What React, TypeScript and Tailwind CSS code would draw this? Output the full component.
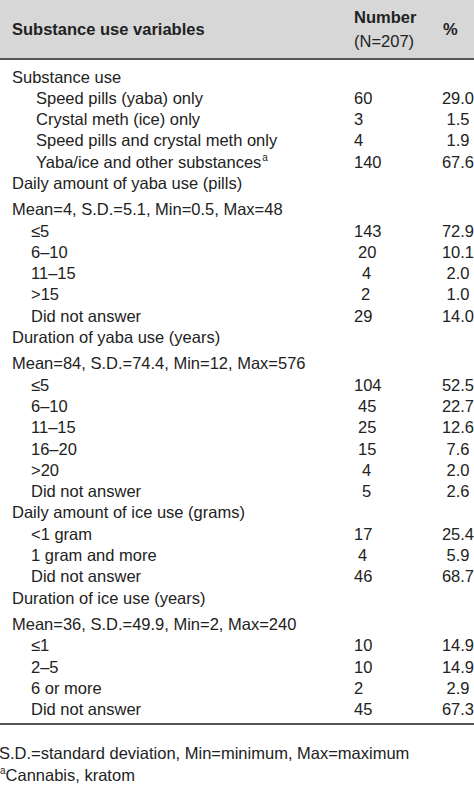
type Row = {
  label: string;
  indent?: "sub" | "item";
  n?: string;
  pct?: string;
  np?: string;
  sup?: string;
  gap?: boolean;
};

const rows: Row[] = [
  { label: "Substance use" },
  { label: "Speed pills (yaba) only", indent: "sub", n: "60", pct: "29.0" },
  { label: "Crystal meth (ice) only", indent: "sub", n: "3", pct: "1.5" },
  { label: "Speed pills and crystal meth only", indent: "sub", n: "4", pct: "1.9" },
  { label: "Yaba/ice and other substances", indent: "sub", n: "140", pct: "67.6", sup: "a" },
  { label: "Daily amount of yaba use (pills)" },
  { label: "Mean=4, S.D.=5.1, Min=0.5, Max=48", gap: true },
  { label: "≤5", indent: "item", n: "143", pct: "72.9" },
  { label: "6–10", indent: "item", n: "20", pct: "10.1", np: "pl-1" },
  { label: "11–15", indent: "item", n: "4", pct: "2.0", np: "pl-2" },
  { label: ">15", indent: "item", n: "2", pct: "1.0", np: "pl-[7px]" },
  { label: "Did not answer", indent: "item", n: "29", pct: "14.0" },
  { label: "Duration of yaba use (years)" },
  { label: "Mean=84, S.D.=74.4, Min=12, Max=576", gap: true },
  { label: "≤5", indent: "item", n: "104", pct: "52.5" },
  { label: "6–10", indent: "item", n: "45", pct: "22.7", np: "pl-1" },
  { label: "11–15", indent: "item", n: "25", pct: "12.6", np: "pl-1" },
  { label: "16–20", indent: "item", n: "15", pct: "7.6", np: "pl-1" },
  { label: ">20", indent: "item", n: "4", pct: "2.0", np: "pl-2" },
  { label: "Did not answer", indent: "item", n: "5", pct: "2.6", np: "pl-2" },
  { label: "Daily amount of ice use (grams)" },
  { label: "<1 gram", indent: "item", n: "17", pct: "25.4" },
  { label: "1 gram and more", indent: "item", n: "4", pct: "5.9", np: "pl-1" },
  { label: "Did not answer", indent: "item", n: "46", pct: "68.7" },
  { label: "Duration of ice use (years)" },
  { label: "Mean=36, S.D.=49.9, Min=2, Max=240", gap: true },
  { label: "≤1", indent: "item", n: "10", pct: "14.9" },
  { label: "2–5", indent: "item", n: "10", pct: "14.9" },
  { label: "6 or more", indent: "item", n: "2", pct: "2.9" },
  { label: "Did not answer", indent: "item", n: "45", pct: "67.3" },
];

function TableRow({ row }: { row: Row }) {
  const pad =
    row.indent === "sub" ? "pl-[36px]" : row.indent === "item" ? "pl-[31px]" : "pl-[12px]";
  return (
    <div className={`grid grid-cols-[354px_84px_40px] h-[21.3px] items-center ${row.gap ? "mt-[5px]" : ""}`}>
      <div className={`${pad} whitespace-nowrap`}>
        {row.label}
        {row.sup && <sup className="text-[10px] relative -top-[7px] ml-[1px]">{row.sup}</sup>}
      </div>
      <div className={row.np ?? ""}>{row.n}</div>
      <div className="text-center">{row.pct}</div>
    </div>
  );
}

export default function App() {
  return (
    <div
      className="w-[474px] h-[789px] overflow-hidden bg-white text-[#222] text-[16.5px]"
      style={{ fontFamily: '"Liberation Sans", Arial, sans-serif' }}
    >
      <div className="grid grid-cols-[354px_84px_40px] h-[60px] bg-[#d7d7d7] border-b-2 border-[#555] items-center">
        <div className="pl-[12px] font-bold">Substance use variables</div>
        <div className="flex flex-col leading-[24px]">
          <span className="font-bold">Number</span>
          <span>(N=207)</span>
        </div>
        <div className="font-bold pl-[5px]">%</div>
      </div>
      <div className="pt-[4.5px] pb-[5px] border-b-2 border-[#555]">
        {rows.map((r, i) => (
          <TableRow key={i} row={r} />
        ))}
      </div>
      <div className="pt-[17px] leading-[22px] whitespace-nowrap">
        <div className="-ml-[1px]">S.D.=standard deviation, Min=minimum, Max=maximum</div>
        <div>
          <sup className="text-[10px] relative -top-[7px]">a</sup>Cannabis, kratom
        </div>
      </div>
    </div>
  );
}
